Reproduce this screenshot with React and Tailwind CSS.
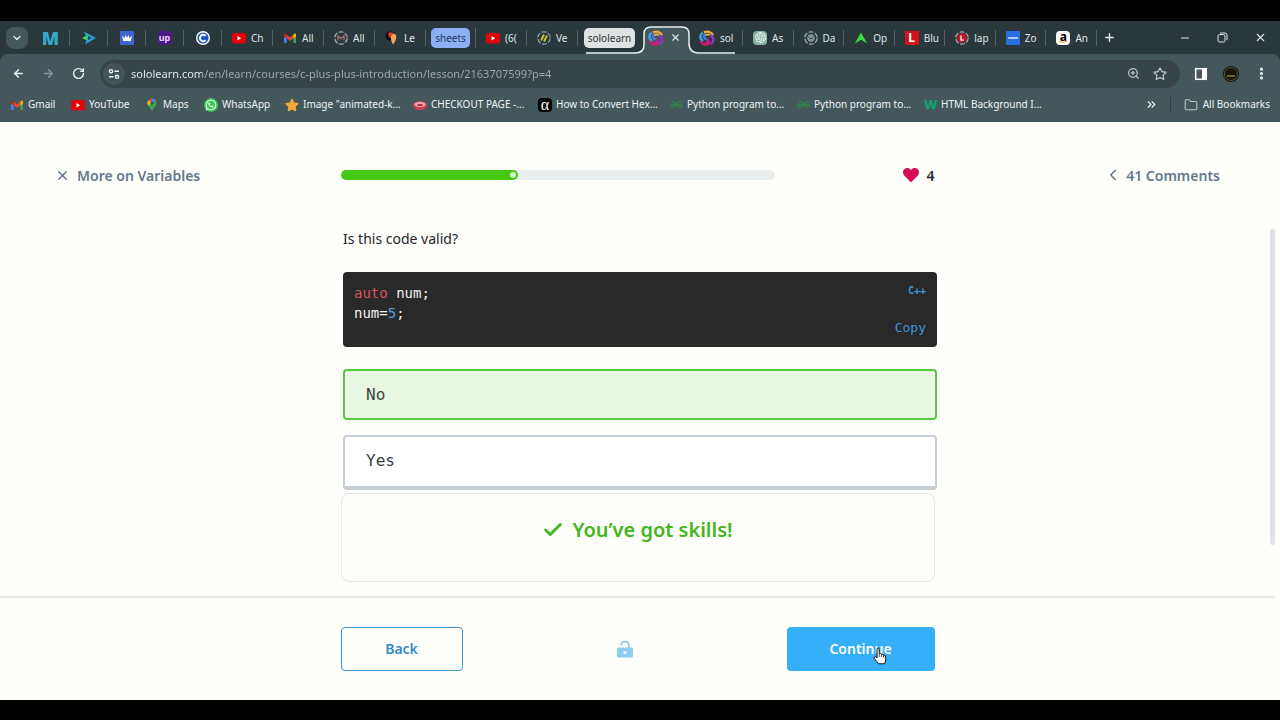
import React from "react";
import { FaWhatsapp, FaStar, FaHeart } from "react-icons/fa";
import { SiGeeksforgeeks, SiOpenai } from "react-icons/si";
import {
  ArrowLeft,
  ArrowRight,
  Check,
  ChevronDown,
  ChevronLeft,
  ChevronsRight,
  EllipsisVertical,
  Folder,
  Minus,
  Plus,
  RotateCw,
  Star,
  X,
  ZoomIn,
} from "lucide-react";

const YouTubeIcon = () => (
  <svg viewBox="0 0 14 14" className="size-[14px] shrink-0">
    <rect x="0" y="2" width="14" height="10.5" rx="2.2" fill="#e0040b" />
    <path d="M5.5 5v4.4L9.2 7.2z" fill="#fff" />
  </svg>
);

const GmailIcon = () => (
  <svg viewBox="0 0 14 14" className="size-[14px] shrink-0">
    <path d="M1 4v8h2.6V6z" fill="#4285f4" />
    <path d="M10.4 6v6H13V4z" fill="#34a853" />
    <path d="M3.6 3.6 7 6.4l3.4-2.8v3.6L7 10 3.6 7.2z" fill="#ea4335" />
    <path d="M10.4 3.6 11.6 2.7Q13 2.2 13 4v1.6l-2.6 2z" fill="#fbbc04" />
    <path d="M3.6 3.6 2.4 2.7Q1 2.2 1 4v1.6l2.6 2z" fill="#c5221f" />
  </svg>
);

const MapsIcon = () => (
  <svg viewBox="0 0 14 14" className="size-[14px] shrink-0">
    <path d="M7 13.5C6.4 10.8 2.6 8.5 2.6 5A4.4 4.4 0 0 1 11.4 5C11.4 8.5 7.6 10.8 7 13.5z" fill="#34a853" />
    <path d="M7 .6A4.4 4.4 0 0 0 3.6 2.2L7 5z" fill="#ea4335" />
    <path d="M7 .6a4.4 4.4 0 0 1 3.8 2.2L7 5z" fill="#4285f4" />
    <path d="M3.6 2.2A4.4 4.4 0 0 0 3.4 7.6L7 5z" fill="#fbbc04" />
    <circle cx="7" cy="5" r="1.6" fill="#3c4f55" />
  </svg>
);

const SololearnIcon = () => (
  <svg viewBox="0 0 16 16" className="size-4 shrink-0" fill="none" strokeWidth="2.4">
    <path d="M5 2.6C8 .8 12.5 1.6 14 5.2" stroke="#f0a640" />
    <path d="M4.6 8C4.6 5 7.5 3.8 11 5" stroke="#e8b25a" strokeWidth="1.8" />
    <path d="M3.6 2.6C.4 5 .8 9.5 4.2 11" stroke="#3aa6e6" />
    <path d="M6 4C4 6 4.5 8.5 8 9.4" stroke="#4b74e0" />
    <path d="M1.6 11C3.5 15 8.5 15.6 11 12.5" stroke="#d8176c" />
    <path d="M8 9.4C10.5 10 9.8 12.6 6.5 12.3" stroke="#c01a90" />
    <path d="M11.5 6C15.5 7 15.5 11.5 11.5 14" stroke="#8d35c8" />
  </svg>
);

const RingIcon = ({ children, color = "#a5b1b4" }) => (
  <svg viewBox="0 0 14 14" className="size-[14px] shrink-0">
    <circle cx="7" cy="7" r="6.2" fill="none" stroke={color} strokeWidth="1.2" strokeDasharray="5 1.5" />
    {children}
  </svg>
);

const compactTabs = [
  {
    name: "M",
    icon: <span className="font-['Open_Sans'] text-[18px] leading-[18px] font-extrabold text-[#35a9c9]">M</span>,
  },
  {
    name: "Play",
    icon: (
      <svg viewBox="0 0 14 14" className="size-[14px]">
        <path d="M2 .5 14 7 3 13.5 5 8z" fill="#28a0d8" />
        <path d="M0 7 5.5 4v6z" fill="#3ed36a" />
        <path d="M6 5v4l3.5-2z" fill="#1c3a55" />
      </svg>
    ),
  },
  {
    name: "Crown",
    icon: (
      <svg viewBox="0 0 14 14" className="size-[14px]">
        <rect width="14" height="14" rx="1" fill="#3d66cf" />
        <path d="M2 4.5 4.3 7 5.6 4 7 6.8 8.4 4 9.7 7 12 4.5 10.8 10H3.2z" fill="#fff" />
      </svg>
    ),
  },
  {
    name: "Upwork",
    icon: (
      <span className="flex size-[14px] items-center justify-center rounded-sm bg-[#4c1a86] text-[9px] leading-none font-bold text-[#e5d3f5]">
        up
      </span>
    ),
  },
  {
    name: "C",
    icon: (
      <svg viewBox="0 0 14 14" className="size-[14px]">
        <circle cx="7" cy="7" r="7" fill="#fff" />
        <circle cx="7" cy="7" r="5.6" fill="#1c4fc4" />
        <path d="M9.6 5A3.2 3.2 0 1 0 9.6 9" fill="none" stroke="#fff" strokeWidth="2" />
      </svg>
    ),
  },
];

const leftTabs = [
  { title: "Ch", icon: <YouTubeIcon /> },
  { title: "All", icon: <GmailIcon /> },
  {
    title: "All",
    icon: (
      <RingIcon>
        <path d="M4 9.5V5l3 2.5L10 5v4.5" fill="none" stroke="#a36a70" strokeWidth="1.4" />
      </RingIcon>
    ),
  },
  {
    title: "Le",
    icon: (
      <svg viewBox="0 0 14 14" className="size-[14px] shrink-0">
        <circle cx="5" cy="5" r="4.6" fill="#14090a" />
        <path d="M3 2C6 .5 9 1.5 9 4L7 8 4 6z" fill="#d9402c" />
        <path d="M6 6C6.5 3 10 2 11 4.5S10 11 8 13.5C7 11 5.5 9 6 6z" fill="#f2a65a" />
      </svg>
    ),
  },
];

const middleTabs = [
  { title: "(6(", icon: <YouTubeIcon /> },
  {
    title: "Ve",
    icon: (
      <RingIcon color="#8fa3b5">
        <path d="M4 9.5 7 3.5M7 10.5l3-6" stroke="#d0c638" strokeWidth="1.8" />
      </RingIcon>
    ),
  },
];

const rightTabs = [
  {
    title: "As",
    icon: (
      <span className="flex size-[14px] shrink-0 items-center justify-center rounded-sm bg-[#85b3a0] text-white">
        <SiOpenai size={11} />
      </span>
    ),
  },
  {
    title: "Da",
    icon: (
      <RingIcon>
        <circle cx="7" cy="7" r="3.8" fill="#87969a" />
        <path d="M4.5 6 7 8l2.5-2.5" fill="none" stroke="#2b383b" />
      </RingIcon>
    ),
  },
  {
    title: "Op",
    icon: (
      <svg viewBox="0 0 14 14" className="size-[14px] shrink-0">
        <path d="M7 1.5 13.2 12.5 7 8.8 .8 12.5z" fill="#35e03c" />
      </svg>
    ),
  },
  {
    title: "Blu",
    icon: (
      <span className="flex size-[14px] shrink-0 items-center justify-center bg-[#d3101d] text-[12px] leading-none font-bold text-white">
        L
      </span>
    ),
  },
  {
    title: "lap",
    icon: (
      <RingIcon>
        <circle cx="7" cy="7" r="4.8" fill="#c11627" />
        <path d="M6 4.5v4.7h2.8" fill="none" stroke="#fff" strokeWidth="1.3" />
      </RingIcon>
    ),
  },
  {
    title: "Zo",
    icon: (
      <svg viewBox="0 0 14 14" className="size-[14px] shrink-0">
        <rect width="14" height="14" rx="1" fill="#2a6fe0" />
        <rect x="2" y="6.2" width="10" height="1.6" rx=".8" fill="#dbe8ff" />
      </svg>
    ),
  },
  {
    title: "An",
    icon: (
      <span className="flex size-[14px] shrink-0 flex-col items-center justify-center rounded-sm bg-white text-[12px] leading-[9px] font-bold text-black">
        a
        <svg viewBox="0 0 10 2" className="h-[2px] w-[10px]">
          <path d="M1 .3Q5 2.5 9 .3" fill="none" stroke="#e8a03c" />
        </svg>
      </span>
    ),
  },
];

const bookmarks = [
  { title: "Gmail", width: "w-[61px]", icon: <GmailIcon /> },
  { title: "YouTube", width: "w-[74px]", icon: <YouTubeIcon /> },
  { title: "Maps", width: "w-[59px]", icon: <MapsIcon /> },
  {
    title: "WhatsApp",
    width: "w-[81px]",
    icon: (
      <span className="flex size-[14px] shrink-0 items-center justify-center rounded-full bg-[#36c759] text-white">
        <FaWhatsapp size={12} />
      </span>
    ),
  },
  { title: 'Image "animated-k...', width: "w-[128px]", icon: <FaStar size={14} color="#f5a83a" className="shrink-0" /> },
  {
    title: "CHECKOUT PAGE -...",
    width: "w-[125px]",
    icon: (
      <svg viewBox="0 0 14 14" className="size-[14px] shrink-0">
        <ellipse cx="7" cy="7.5" rx="7" ry="4.5" fill="#cf3f52" />
        <ellipse cx="7" cy="6.5" rx="5.5" ry="2.6" fill="#f0a9af" />
        <ellipse cx="7" cy="7" rx="3" ry="1" fill="#a82337" />
      </svg>
    ),
  },
  {
    title: "How to Convert Hex...",
    width: "w-[132px]",
    icon: (
      <span className="flex size-[14px] shrink-0 items-center justify-center rounded-sm bg-black font-['Liberation_Serif'] text-[16px] leading-[12px] text-white">
        α
      </span>
    ),
  },
  { title: "Python program to...", width: "w-[127px]", icon: <SiGeeksforgeeks size={13} color="#2d8a46" className="shrink-0" /> },
  { title: "Python program to...", width: "w-[127px]", icon: <SiGeeksforgeeks size={13} color="#2d8a46" className="shrink-0" /> },
  {
    title: "HTML Background I...",
    width: "w-[127px]",
    icon: <span className="w-[13px] shrink-0 text-[13px] leading-none font-black text-[#12a06c]">W</span>,
  },
];

function Tab({ title, icon }) {
  return (
    <button className="flex h-4 items-center gap-[5px] border-r border-[#536367] pl-[10px] text-[10px] leading-4 whitespace-nowrap">
      {icon}
      {title}
    </button>
  );
}

function TabStrip() {
  return (
    <div className="flex h-[33px] items-center text-[#dfe6e8]">
      <button aria-label="Search tabs" className="ml-[6px] flex size-[22px] items-center justify-center rounded-lg bg-[#44575b]">
        <ChevronDown size={12} strokeWidth={3} />
      </button>
      <div className="ml-1 grid w-[190px] grid-cols-5">
        {compactTabs.map((tab) => (
          <button
            key={tab.name}
            aria-label={tab.name}
            className="flex h-4 items-center justify-center border-r border-[#536367]"
          >
            {tab.icon}
          </button>
        ))}
      </div>
      <div className="grid w-[204px] grid-cols-4">
        {leftTabs.map((tab, i) => (
          <Tab key={i} {...tab} />
        ))}
      </div>
      <div className="flex w-[50px] items-center justify-center border-r border-[#536367]">
        <button className="h-5 rounded-[5px] bg-[#8db0f5] px-1 text-[10px] leading-5 text-[#23375f]">sheets</button>
      </div>
      <div className="grid w-[102px] grid-cols-2">
        {middleTabs.map((tab, i) => (
          <Tab key={i} {...tab} />
        ))}
      </div>
      <div className="relative flex h-full w-[165px] items-center">
        <svg viewBox="0 0 165 33" className="absolute inset-0 h-full w-full">
          <path
            d="M8 32H57Q66 32 66 24V13Q66 6 73 6H104Q111 6 111 13V22Q111 32 121 32V33H8z"
            fill="#44585c"
          />
          <path
            d="M8 32H57Q66 32 66 24V13Q66 6 73 6H104Q111 6 111 13V22Q111 32 121 32H157"
            fill="none"
            stroke="#e9eeee"
            strokeWidth="1.5"
          />
        </svg>
        <button className="relative ml-[6px] h-5 w-[51px] rounded-[5px] bg-[#dfe1e3] text-[10px] leading-5 text-[#303538]">
          sololearn
        </button>
        <div className="relative ml-[13px] flex w-[43px] items-center gap-[6px]">
          <SololearnIcon />
          <button aria-label="Close tab">
            <X size={11} strokeWidth={2.5} />
          </button>
        </div>
        <button className="relative flex h-4 flex-1 items-center gap-[5px] border-r border-[#536367] pl-2 text-[10px] leading-4">
          <SololearnIcon />
          sol
        </button>
      </div>
      <div className="grid w-[354px] grid-cols-7">
        {rightTabs.map((tab, i) => (
          <Tab key={i} {...tab} />
        ))}
      </div>
      <button aria-label="New tab" className="ml-[6px]">
        <Plus size={13} strokeWidth={2.5} />
      </button>
      <div className="ml-auto flex items-center gap-[26px] pr-[13px]">
        <button aria-label="Minimize">
          <Minus size={12} />
        </button>
        <button aria-label="Restore">
          <svg viewBox="0 0 11 11" className="size-[11px]" fill="none" stroke="currentColor">
            <rect x="1" y="2.5" width="7" height="7.5" rx="1.5" />
            <path d="M3 1H8Q10 1 10 3V8" />
          </svg>
        </button>
        <button aria-label="Close window">
          <X size={13} />
        </button>
      </div>
    </div>
  );
}

function Toolbar() {
  return (
    <div className="flex h-[39px] items-center pr-[11px] pl-3 text-[#eef3f4]">
      <button aria-label="Back to previous page">
        <ArrowLeft size={13} strokeWidth={2.5} />
      </button>
      <button aria-label="Forward" className="ml-[17px] text-[#87979b]">
        <ArrowRight size={13} strokeWidth={2.5} />
      </button>
      <button aria-label="Reload" className="ml-[17px]">
        <RotateCw size={13} strokeWidth={2.5} />
      </button>
      <div className="ml-[15px] flex h-7 flex-1 items-center rounded-full bg-[#374549] pr-[13px] pl-[3px]">
        <button aria-label="Site information" className="flex size-[22px] items-center justify-center rounded-full bg-[#445357]">
          <svg viewBox="0 0 12 12" className="size-3" fill="none" stroke="currentColor" strokeWidth="1.4">
            <circle cx="3" cy="3.2" r="1.6" />
            <path d="M6.5 3.2H11M1 8.8h4.5" />
            <circle cx="9" cy="8.8" r="1.6" />
          </svg>
        </button>
        <input
          aria-label="Address"
          defaultValue="sololearn.com/en/learn/courses/c-plus-plus-introduction/lesson/2163707599?p=4"
          className="ml-[6px] h-5 min-w-0 flex-1 bg-[linear-gradient(to_right,#f1f5f5_71px,#a2adb0_71px)] bg-clip-text text-[11px] text-transparent outline-none"
        />
        <button aria-label="Zoom" className="text-[#bcc7c9]">
          <ZoomIn size={13} strokeWidth={2.2} />
        </button>
        <button aria-label="Bookmark this page" className="ml-[13px] text-[#bcc7c9]">
          <Star size={14} strokeWidth={2.2} />
        </button>
      </div>
      <button aria-label="Side panel" className="ml-[14px]">
        <svg viewBox="0 0 14 14" className="size-[14px]">
          <rect x="1.7" y="1.7" width="10.6" height="10.6" fill="none" stroke="#fff" strokeWidth="1.5" />
          <path d="M8 1h5v12H8z" fill="#fff" />
        </svg>
      </button>
      <button aria-label="Profile" className="ml-[15px]">
        <svg viewBox="0 0 16 16" className="size-4">
          <circle cx="8" cy="8" r="8" fill="#161611" />
          <circle cx="8" cy="8" r="6.5" fill="none" stroke="#6d6538" strokeWidth=".8" />
          <path d="M4 10h8" stroke="#bfae6a" />
        </svg>
      </button>
      <button aria-label="Menu" className="ml-[15px]">
        <EllipsisVertical size={15} strokeWidth={3} />
      </button>
    </div>
  );
}

function BookmarksBar() {
  return (
    <div className="flex h-[29px] items-center pb-[6px] pl-[10px] text-[10px] text-[#eef3f4]">
      {bookmarks.map((b, i) => (
        <a key={i} href="#" className={"flex h-5 shrink-0 items-center gap-1 whitespace-nowrap " + b.width}>
          {b.icon}
          {b.title}
        </a>
      ))}
      <button aria-label="More bookmarks" className="ml-auto">
        <ChevronsRight size={13} strokeWidth={2.2} />
      </button>
      <span className="ml-[12px] h-4 w-px bg-[#2f3e42]" />
      <a href="#" className="ml-[13px] flex items-center gap-[5px] pr-[10px] whitespace-nowrap">
        <Folder size={14} strokeWidth={1.8} className="text-[#b7c3c5]" />
        All Bookmarks
      </a>
    </div>
  );
}

function LessonHeader() {
  return (
    <header className="flex h-[107px] items-center pr-[5px] pb-px text-[14px] font-semibold text-[#65788a]">
      <div className="flex-1 pl-[55px]">
        <a href="#" className="flex items-center gap-[7px] whitespace-nowrap">
          <X size={15} strokeWidth={2.4} />
          More on Variables
        </a>
      </div>
      <div className="flex w-[594px] items-center">
        <div
          role="progressbar"
          aria-label="Lesson progress"
          aria-valuenow={41}
          className="h-[10px] w-[434px] rounded-full bg-[#e9eeef]"
        >
          <div className="flex h-full w-[177px] items-center justify-end rounded-full bg-[#45c812] pr-[2px]">
            <span className="size-[6px] rounded-full bg-[#d9f7c8]" />
          </div>
        </div>
        <div className="ml-auto flex items-center gap-[7px] text-[#23282c]">
          <FaHeart size={16} color="#d80b55" />4
        </div>
      </div>
      <div className="flex flex-1 justify-end pr-[55px]">
        <a href="#" className="flex items-center gap-1 whitespace-nowrap">
          <ChevronLeft size={18} strokeWidth={2.2} />
          41 Comments
        </a>
      </div>
    </header>
  );
}

function CodeBlock() {
  return (
    <div className="mt-[23px] flex h-[75px] justify-between rounded bg-[#292929] px-[11px] pt-[11px] font-['DejaVu_Sans_Mono',monospace]">
      <pre className="font-['DejaVu_Sans_Mono',monospace] text-[14px] leading-5 text-[#f2f2f2]">
        <span className="text-[#d9535f]">auto</span> num;{"\n"}num=<span className="text-[#5b9bdc]">5</span>;
      </pre>
      <div className="flex flex-col items-end gap-[21px] text-[#3f96db]">
        <span className="text-[10px] leading-4 font-bold">C++</span>
        <button className="text-[13px] leading-4">Copy</button>
      </div>
    </div>
  );
}

export default function App() {
  return (
    <div className="min-h-screen bg-black pt-[21px] pb-5 font-['Noto_Sans',sans-serif]">
      <div className="bg-[#2b383b]">
        <TabStrip />
        <div className="rounded-t-lg bg-[#44585c]">
          <Toolbar />
          <BookmarksBar />
        </div>
      </div>

      <main className="bg-[#fefefb]">
        <LessonHeader />
        <div className="flex justify-center">
          <div className="ml-[10px] flex flex-1 justify-center">
            <div className="w-[594px]">
              <p className="text-[14px] leading-5 text-[#222729]">Is this code valid?</p>
              <CodeBlock />
              <button className="mt-[22px] block h-[51px] w-full rounded border-2 border-[#56c743] bg-[#e9f8e3] px-[21px] text-left font-['DejaVu_Sans_Mono',monospace] text-[16px] text-[#39443c]">
                No
              </button>
              <button className="mt-[15px] block h-[55px] w-full rounded border-2 border-b-4 border-[#c6cfd6] bg-white px-[21px] pb-[2px] text-left font-['DejaVu_Sans_Mono',monospace] text-[16px] text-[#39424a]">
                Yes
              </button>
            </div>
          </div>
          <div className="mr-[5px] h-[316px] w-[5px] rounded-full bg-[#dfe3e8]" />
        </div>

        <div className="pr-[5px]">
          <div className="mx-auto mt-[-52px] flex h-[89px] w-[594px] justify-center rounded-lg border border-[#e2e6e8] pt-5 text-[20px] leading-8 font-semibold text-[#45b51d]">
            <p className="flex h-8 items-center gap-2">
              <Check size={22} strokeWidth={3.2} />
              You’ve got skills!
            </p>
          </div>
        </div>

        <footer className="mt-[14px] mr-[5px] flex h-[104px] items-center justify-center border-t-2 border-[#e7eaeb]">
          <div className="flex w-[594px] items-center justify-between">
            <button className="h-11 w-[122px] rounded border border-[#3d94cc] pb-[2px] text-[14px] font-semibold text-[#2f8ac8]">
              Back
            </button>
            <svg viewBox="0 0 16 18" className="h-[18px] w-4">
              <path d="M4 5.5A4 4 0 0 1 12 5.5V8" fill="none" stroke="#9ccbe6" strokeWidth="2" />
              <rect x="0" y="7.5" width="16" height="10" rx="1.5" fill="#8ccdf4" />
              <circle cx="8" cy="12.5" r="1.8" fill="#e4f5fe" />
            </svg>
            <button className="relative h-11 w-[148px] rounded bg-[#35aff7] pb-[2px] text-[14px] font-semibold text-white">
              Continue
              <svg viewBox="0 0 14 18" className="absolute top-[20px] left-[86px] h-[18px] w-[14px]">
                <path
                  d="M4 11V2.2Q4 1 5.1 1T6.2 2.2V6.5Q8.2 5.8 8.4 7.3 10.3 6.7 10.5 8.2 12.7 7.8 12.7 10V12.5Q12.7 14.5 11.5 16.8H5.5Q4 14.5 1.2 11.5 .8 9.5 2.6 9.8z"
                  fill="#fff"
                  stroke="#111"
                />
                <path d="M6.2 7v3M8.4 7.5V10M10.5 8.5V10.5" stroke="#111" strokeWidth=".8" />
              </svg>
            </button>
          </div>
        </footer>
      </main>
    </div>
  );
}
